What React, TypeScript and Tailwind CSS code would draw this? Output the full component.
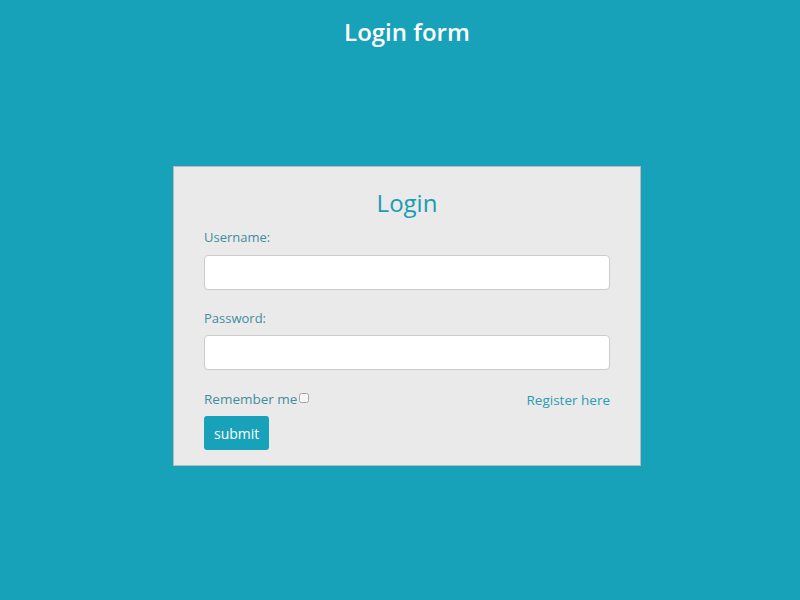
export default function App() {
  return (
    <div
      className="min-h-[600px] w-full bg-[#18a2b9] pl-[14px] pt-[14px]"
      style={{ fontFamily: '"Open Sans", "Noto Sans", sans-serif' }}
    >
      <h1 className="text-center text-[24px] font-semibold leading-[36px] text-white">Login form</h1>
      <div className="mx-auto mt-[116px] w-[468px] border border-[#b9b9b9] bg-[#eaeaea] px-[30px] pb-[15px] pt-[18px]">
        <h2 className="text-center text-[24px] leading-[36px] text-[#1a9cb3]">Login</h2>
        <form className="flex flex-col" onSubmit={(e) => e.preventDefault()}>
          <label className="mt-[6px] text-[13px] leading-[20px] text-[#3f8e9e]">Username:</label>
          <input
            type="text"
            className="mt-[8px] h-[35px] w-full rounded-[4px] border border-[#cccccc] bg-white px-3 outline-none"
          />
          <label className="mt-[18px] text-[13px] leading-[20px] text-[#3f8e9e]">Password:</label>
          <input
            type="password"
            className="mt-[7px] h-[35px] w-full rounded-[4px] border border-[#cccccc] bg-white px-3 outline-none"
          />
          <div className="mt-[18px] flex items-center justify-between">
            <label className="flex items-center text-[13.5px] leading-[20px] text-[#3f8e9e]">
              Remember me
              <input type="checkbox" className="ml-[2px] h-[10px] w-[10px] -translate-y-[1px] opacity-60" />
            </label>
            <a href="#" className="mt-[2px] text-[13.5px] leading-[20px] text-[#2a9db1]">Register here</a>
          </div>
          <div className="mt-[6px]">
            <button
              type="submit"
              className="h-[34px] rounded-[3px] bg-[#18a2b9] px-[10px] text-[14px] text-white"
            >
              submit
            </button>
          </div>
        </form>
      </div>
    </div>
  );
}
